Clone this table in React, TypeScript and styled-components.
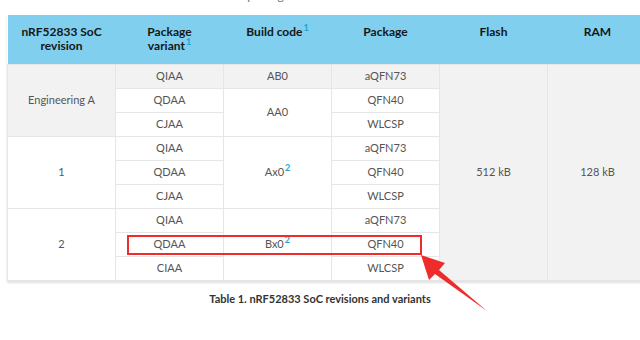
import styled, { createGlobalStyle } from "styled-components";

const GlobalStyle = createGlobalStyle`
  html, body {
    margin: 0;
    padding: 0;
    background: #ffffff;
    overflow: hidden;
  }
  body {
    font-family: Lato, "Liberation Sans", sans-serif;
  }
`;

const Page = styled.div`
  position: relative;
  width: 640px;
  height: 340px;
  overflow: hidden;
  padding-left: 7px;
  box-sizing: border-box;
`;

const Intro = styled.p`
  margin: -12px 0 0 0;
  height: 15px;
  padding-left: 86px;
  font-size: 12px;
  line-height: 15px;
  color: #777;
  white-space: nowrap;
`;

const Table = styled.table`
  border-collapse: collapse;
  table-layout: fixed;
  width: 640px;
  margin-top: 12px;
  box-shadow: 0 2px 2px rgba(0, 0, 0, 0.12);
`;

const HeadCell = styled.th<{ $w?: number }>`
  width: ${(p) => p.$w ?? 108}px;
  height: 49px;
  padding: 10px 4px 0;
  box-sizing: border-box;
  vertical-align: top;
  background: #80cfee;
  color: #161616;
  font-size: 12px;
  font-weight: 700;
  line-height: 14px;
  text-align: center;
`;

const Cell = styled.td<{ $shade?: boolean }>`
  height: 24px;
  padding: 0 4px;
  box-sizing: border-box;
  border: 1px solid #e6e6e6;
  background: ${(p) => (p.$shade ? "#f2f2f2" : "#ffffff")};
  color: #555;
  font-size: 11px;
  line-height: 14px;
  text-align: center;
  vertical-align: middle;
`;

const Note = styled.sup`
  color: #1fa3d8;
  font-weight: 700;
  font-size: 9px;
  line-height: 0;
  margin-left: 1px;
`;

const Caption = styled.div`
  margin-top: 11px;
  width: 626px;
  text-align: center;
  font-size: 11px;
  font-weight: 700;
  color: #333;
`;

const Highlight = styled.div`
  position: absolute;
  left: 127px;
  top: 235px;
  width: 295px;
  height: 20px;
  box-sizing: border-box;
  border: 2px solid #ee2c2c;
  pointer-events: none;
`;

const Arrow = styled.svg`
  position: absolute;
  left: 0;
  top: 0;
  pointer-events: none;
`;

const rows: {
  rev?: { label: string; span: number };
  variant: string;
  build?: { label: React.ReactNode; span: number };
  pkg: string;
}[] = [
  { rev: { label: "Engineering A", span: 3 }, variant: "QIAA", build: { label: "AB0", span: 1 }, pkg: "aQFN73" },
  { variant: "QDAA", build: { label: "AA0", span: 2 }, pkg: "QFN40" },
  { variant: "CJAA", pkg: "WLCSP" },
  {
    rev: { label: "1", span: 3 },
    variant: "QIAA",
    build: { label: <>Ax0<Note>2</Note></>, span: 3 },
    pkg: "aQFN73",
  },
  { variant: "QDAA", pkg: "QFN40" },
  { variant: "CJAA", pkg: "WLCSP" },
  {
    rev: { label: "2", span: 3 },
    variant: "QIAA",
    build: { label: <>Bx0<Note>2</Note></>, span: 3 },
    pkg: "aQFN73",
  },
  { variant: "QDAA", pkg: "QFN40" },
  { variant: "CIAA", pkg: "WLCSP" },
];

export default function App() {
  return (
    <Page>
      <GlobalStyle />
      <Intro>The nRF52833 is available in package variants as listed in the table below.</Intro>
      <Table>
        <thead>
          <tr>
            <HeadCell>nRF52833 SoC<br />revision</HeadCell>
            <HeadCell>Package<br />variant<Note>1</Note></HeadCell>
            <HeadCell>Build code<Note>1</Note></HeadCell>
            <HeadCell>Package</HeadCell>
            <HeadCell>Flash</HeadCell>
            <HeadCell $w={100}>RAM</HeadCell>
          </tr>
        </thead>
        <tbody>
          {rows.map((r, i) => {
            const shade = i === 0;
            return (
              <tr key={i}>
                {r.rev && (
                  <Cell rowSpan={r.rev.span} $shade={shade}>
                    {r.rev.label}
                  </Cell>
                )}
                <Cell $shade={shade}>{r.variant}</Cell>
                {r.build && (
                  <Cell rowSpan={r.build.span} $shade={shade}>
                    {r.build.label}
                  </Cell>
                )}
                <Cell $shade={shade}>{r.pkg}</Cell>
                {i === 0 && (
                  <>
                    <Cell rowSpan={9} $shade>512 kB</Cell>
                    <Cell rowSpan={9} $shade>128 kB</Cell>
                  </>
                )}
              </tr>
            );
          })}
        </tbody>
      </Table>
      <Caption>Table 1. nRF52833 SoC revisions and variants</Caption>
      <Highlight />
      <Arrow width="640" height="340" viewBox="0 0 640 340">
        <polygon
          points="421,255 445,263 439,270 487,311 435,274 429,280"
          fill="#ee2c2c"
        />
      </Arrow>
    </Page>
  );
}
